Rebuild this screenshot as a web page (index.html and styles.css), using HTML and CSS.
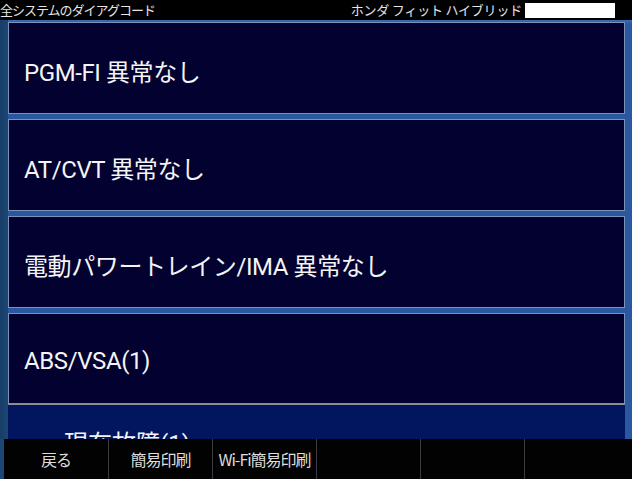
FILE: index.html
```html
<!DOCTYPE html>
<html lang="ja">
<head>
<meta charset="utf-8">
<link rel="stylesheet" href="styles.css">
</head>
<body>
<div class="screen">
  <header class="topbar">
    <span class="title">全システムのダイアグコード</span>
    <div class="vehicle">
      <span class="model">ホンダ フィット ハイブリッド</span>
      <span class="vin"></span>
    </div>
  </header>
  <main class="main">
    <div class="list">
      <div class="card">PGM-FI 異常なし</div>
      <div class="card">AT/CVT 異常なし</div>
      <div class="card">電動パワートレイン/IMA 異常なし</div>
      <div class="card last">ABS/VSA(1)</div>
      <div class="row-selected">現在故障(1)</div>
    </div>
  </main>
  <footer class="footer">
    <div class="btn">戻る</div>
    <div class="btn">簡易印刷</div>
    <div class="btn">Wi-Fi簡易印刷</div>
    <div class="btn"></div>
    <div class="btn"></div>
    <div class="btn"></div>
  </footer>
</div>
</body>
</html>
```

FILE: styles.css
```css
html, body {
  margin: 0;
  padding: 0;
  background: #000;
}
.screen {
  width: 632px;
  height: 479px;
  overflow: hidden;
  display: flex;
  flex-direction: column;
  font-family: Roboto, "Noto Sans CJK JP", sans-serif;
  color: #f2f2f2;
}
.topbar {
  height: 20px;
  flex: 0 0 20px;
  background: #000;
  display: flex;
  align-items: center;
  justify-content: space-between;
  font-family: "Noto Sans CJK JP", sans-serif;
  font-size: 13px;
  color: #e6e6e6;
}
.title {
  line-height: 20px;
  letter-spacing: -1px;
}
.vehicle {
  display: flex;
  align-items: center;
  gap: 3px;
  padding-right: 17px;
}
.model {
  line-height: 20px;
  letter-spacing: -0.2px;
}
.vin {
  display: block;
  width: 90px;
  height: 15px;
  background: #fff;
}
.main {
  height: 419px;
  flex: 0 0 419px;
  overflow: hidden;
  background:
    linear-gradient(to right, #173d66 0, #1c4676 8px, transparent 8px),
    linear-gradient(to bottom, #3c6cb4 0, #2a58a0 4px, #2a58a0 100%);
  padding: 2px 7px 0 8px;
  box-sizing: border-box;
}
.list {
  display: flex;
  flex-direction: column;
  gap: 5px;
}
.card {
  height: 92px;
  box-sizing: border-box;
  background: #03012f;
  border: 1px solid #7d92b8;
  display: flex;
  align-items: center;
  padding: 4px 0 0 15px;
  font-size: 24px;
  letter-spacing: -0.4px;
  color: #f4f4f4;
}
.card.last {
  border-bottom: 2px solid #8c8c92;
}
.row-selected {
  margin-top: -5px;
  height: 80px;
  background: #021660;
  padding: 25px 0 0 56px;
  box-sizing: border-box;
  font-size: 24px;
  line-height: 28px;
  color: #f4f4f4;
}
.footer {
  height: 40px;
  flex: 0 0 40px;
  display: flex;
  background: linear-gradient(to right, #1c4676 0, #1c4676 4px, #020202 4px);
  padding-left: 4px;
  box-sizing: border-box;
}
.btn {
  width: 104px;
  flex: 0 0 104px;
  box-sizing: border-box;
  border-left: 1px solid #3a3a40;
  display: flex;
  align-items: center;
  justify-content: center;
  font-family: "Noto Sans CJK JP", sans-serif;
  font-size: 16px;
  color: #dcdcdc;
  letter-spacing: -1px;
  white-space: nowrap;
}
.btn:first-child {
  border-left: none;
}
```
